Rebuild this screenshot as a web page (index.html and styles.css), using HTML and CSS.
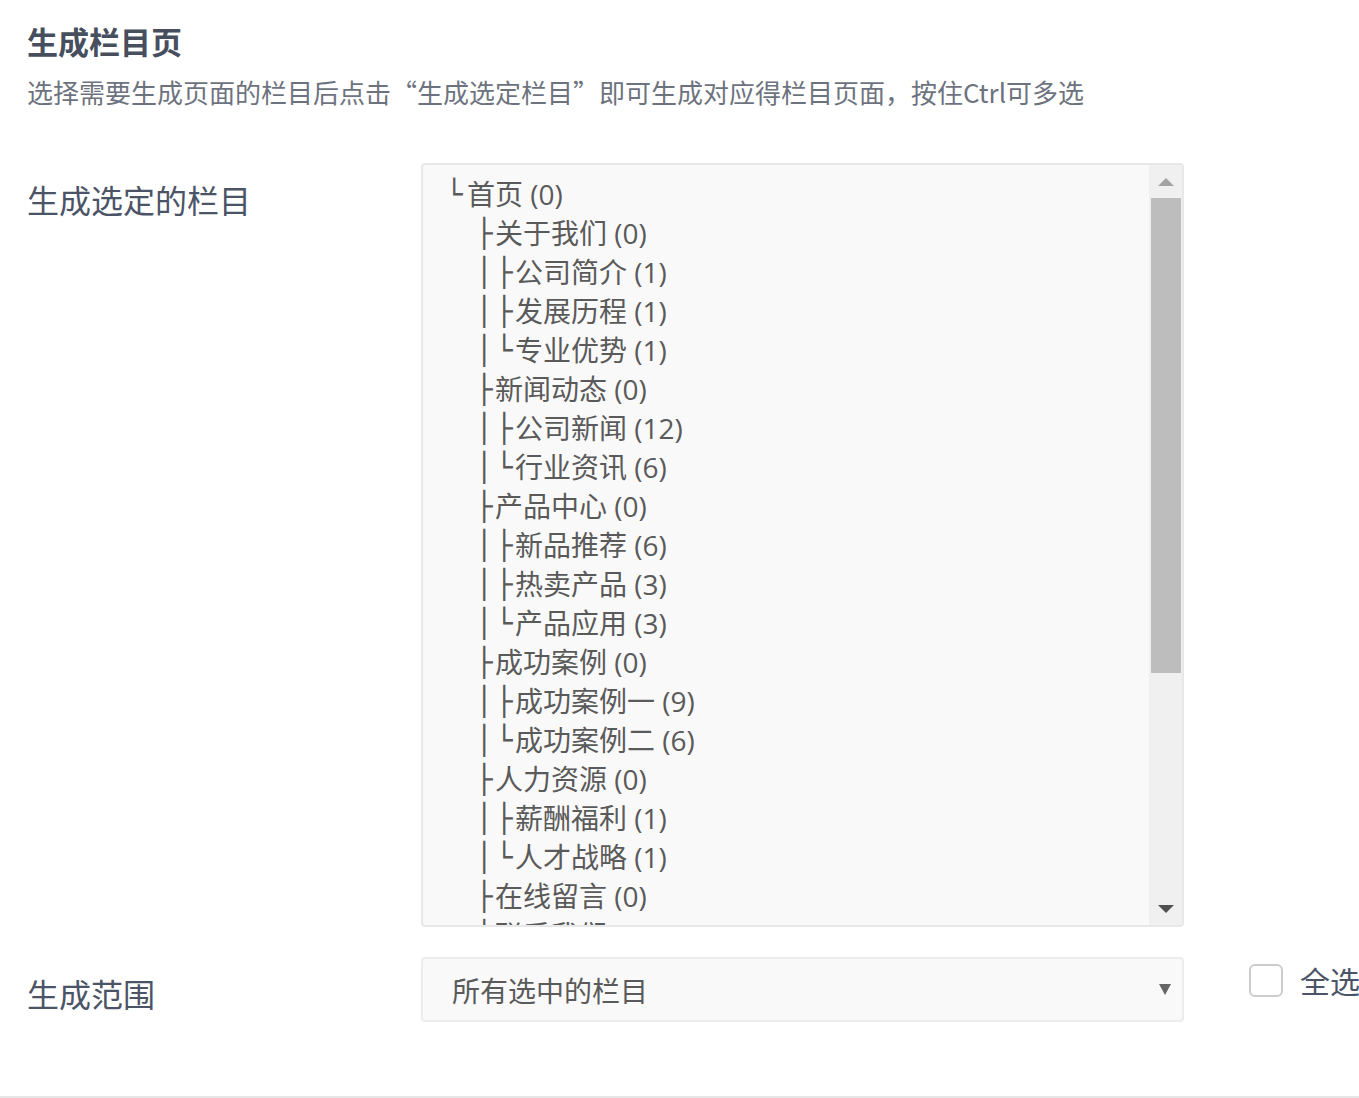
FILE: index.html
```html
<!DOCTYPE html>
<html lang="zh-CN">
<head>
    <meta charset="UTF-8">
    <meta name="viewport" content="width=device-width, initial-scale=1.0">
    <title>生成栏目页</title>
    <link rel="stylesheet" href="styles.css">
</head>
<body>
    <div class="page">
        <h1 class="title">生成栏目页</h1>
        <p class="desc">选择需要生成页面的栏目后点击“生成选定栏目”即可生成对应得栏目页面，按住Ctrl可多选</p>

        <!-- 栏目列表 -->
        <div class="row">
            <div class="label">生成选定的栏目</div>
            <div class="listbox">
                <div class="options">
                    <div class="opt"><span class="br root">└</span>首页 (0)</div>
                    <div class="opt lv1"><span class="br">├</span>关于我们 (0)</div>
                    <div class="opt lv2"><span class="pipe">│</span><span class="br">├</span>公司简介 (1)</div>
                    <div class="opt lv2"><span class="pipe">│</span><span class="br">├</span>发展历程 (1)</div>
                    <div class="opt lv2"><span class="pipe">│</span><span class="br">└</span>专业优势 (1)</div>
                    <div class="opt lv1"><span class="br">├</span>新闻动态 (0)</div>
                    <div class="opt lv2"><span class="pipe">│</span><span class="br">├</span>公司新闻 (12)</div>
                    <div class="opt lv2"><span class="pipe">│</span><span class="br">└</span>行业资讯 (6)</div>
                    <div class="opt lv1"><span class="br">├</span>产品中心 (0)</div>
                    <div class="opt lv2"><span class="pipe">│</span><span class="br">├</span>新品推荐 (6)</div>
                    <div class="opt lv2"><span class="pipe">│</span><span class="br">├</span>热卖产品 (3)</div>
                    <div class="opt lv2"><span class="pipe">│</span><span class="br">└</span>产品应用 (3)</div>
                    <div class="opt lv1"><span class="br">├</span>成功案例 (0)</div>
                    <div class="opt lv2"><span class="pipe">│</span><span class="br">├</span>成功案例一 (9)</div>
                    <div class="opt lv2"><span class="pipe">│</span><span class="br">└</span>成功案例二 (6)</div>
                    <div class="opt lv1"><span class="br">├</span>人力资源 (0)</div>
                    <div class="opt lv2"><span class="pipe">│</span><span class="br">├</span>薪酬福利 (1)</div>
                    <div class="opt lv2"><span class="pipe">│</span><span class="br">└</span>人才战略 (1)</div>
                    <div class="opt lv1"><span class="br">├</span>在线留言 (0)</div>
                    <div class="opt lv1"><span class="br">├</span>联系我们 (1)</div>
                </div>
                <div class="scrollbar">
                    <div class="sb-btn"><i class="arrow-up"></i></div>
                    <div class="sb-track"><div class="sb-thumb"></div></div>
                    <div class="sb-btn"><i class="arrow-down"></i></div>
                </div>
            </div>
        </div>

        <!-- 生成范围 -->
        <div class="row range">
            <div class="label">生成范围</div>
            <div class="select">
                <span>所有选中的栏目</span>
                <i class="caret"></i>
            </div>
            <label class="check"><span class="box"></span>全选</label>
        </div>
    </div>
    <div class="footer-line"></div>
</body>
</html>
```

FILE: styles.css
```css
/* Estilos globales */
body {
    font-family: "Noto Sans CJK SC", "Noto Sans", sans-serif;
    background: #fff;
    margin: 0;
    padding: 0;
    overflow: hidden;
    width: 1359px;
    height: 1098px;
}

.page {
    padding: 0 27px;
}

/* Títulos */
.title {
    margin: 20px 0 0;
    font-size: 31px;
    line-height: 42px;
    font-weight: bold;
    color: #474f5e;
}

.desc {
    margin: 12px 0 0;
    font-size: 26px;
    line-height: 36px;
    color: #6d737e;
    white-space: nowrap;
}

/* Filas del formulario */
.row {
    display: flex;
    align-items: flex-start;
    margin-top: 53px;
    white-space: nowrap;
}

.row.range {
    margin-top: 30px;
}

.label {
    flex: 0 0 394px;
    padding-top: 14px;
    font-size: 32px;
    line-height: 44px;
    color: #4b5467;
}

/* Lista de columnas */
.listbox {
    flex: 0 0 763px;
    height: 764px;
    box-sizing: border-box;
    border: 2px solid #e8e8e8;
    border-radius: 4px;
    background: #f9f9f9;
    display: flex;
    overflow: hidden;
}

.options {
    flex: 1;
    height: 760px;
    box-sizing: border-box;
    padding: 10px 0 0 30px;
    overflow: hidden;
    font-family: "Open Sans", "Noto Sans CJK SC", sans-serif;
    font-size: 28px;
    line-height: 39px;
    color: #5a5a5a;
}

.opt {
    height: 39px;
}

.opt.lv1,
.opt.lv2 {
    padding-left: 30px;
}

.br,
.pipe {
    display: inline-block;
    vertical-align: top;
    font-family: "DejaVu Sans", sans-serif;
    text-indent: -7px;
    color: #5a5a5a;
}

.br {
    width: 12px;
}

.br.root {
    width: 14px;
}

.pipe {
    width: 20px;
}

/* Barra de desplazamiento */
.scrollbar {
    flex: 0 0 33px;
    background: #f0f0f0;
    display: flex;
    flex-direction: column;
}

.sb-btn {
    height: 33px;
    display: flex;
    justify-content: center;
    align-items: center;
}

.sb-track {
    flex: 1;
    padding: 0 1px 0 2px;
}

.sb-thumb {
    height: 475px;
    background: #bdbdbd;
}

.arrow-up {
    width: 0;
    height: 0;
    border-left: 8px solid transparent;
    border-right: 8px solid transparent;
    border-bottom: 8px solid #a3a3a3;
}

.arrow-down {
    width: 0;
    height: 0;
    border-left: 8px solid transparent;
    border-right: 8px solid transparent;
    border-top: 8px solid #505050;
}

/* Selector */
.select {
    flex: 0 0 763px;
    height: 65px;
    box-sizing: border-box;
    border: 2px solid #ececec;
    border-radius: 4px;
    background: #f9f9f9;
    display: flex;
    align-items: center;
    justify-content: space-between;
    padding: 0 11px 0 29px;
    font-size: 28px;
    color: #5a5a5a;
}

.caret {
    width: 0;
    height: 0;
    border-left: 6px solid transparent;
    border-right: 6px solid transparent;
    border-top: 11px solid #666;
}

.check {
    flex-shrink: 0;
    display: flex;
    align-items: center;
    margin-left: 65px;
    margin-top: 3px;
    font-size: 30px;
    line-height: 40px;
    color: #4b5467;
}

.check .box {
    width: 34px;
    height: 33px;
    box-sizing: border-box;
    border: 2px solid #cccccc;
    border-radius: 6px;
    background: #fff;
    margin-right: 17px;
}

.footer-line {
    margin-top: 74px;
    height: 2px;
    background: #e6e6e6;
}
```
